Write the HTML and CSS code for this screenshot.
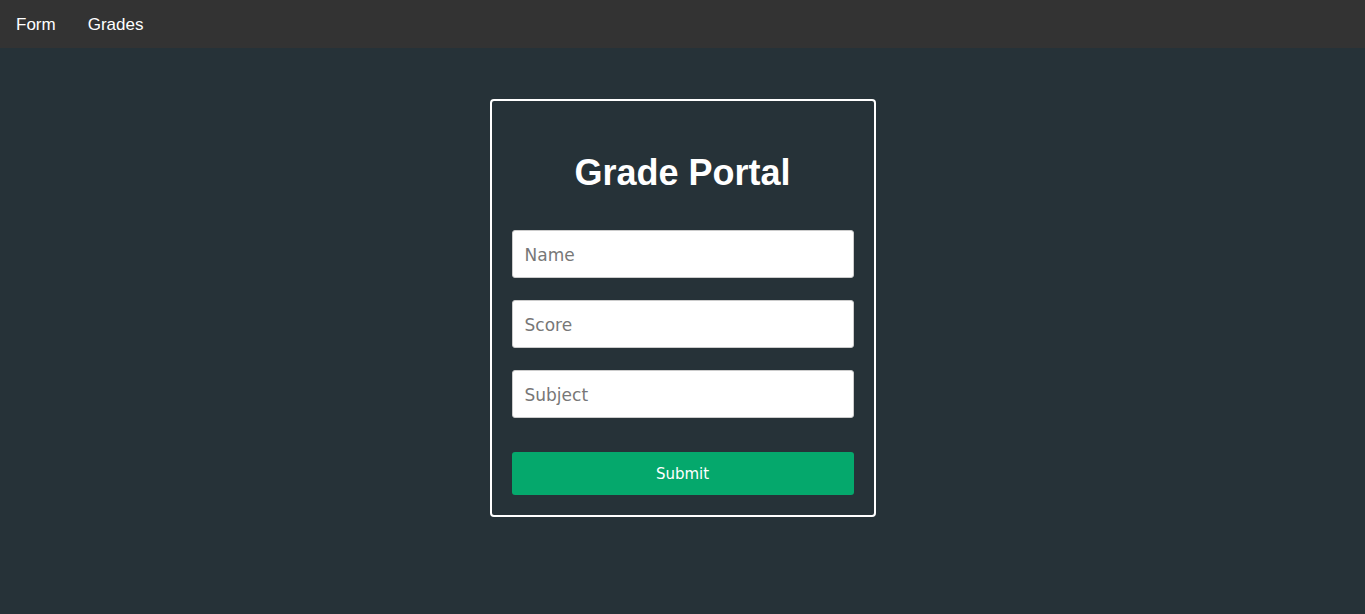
FILE: index.html
```html
<!DOCTYPE html>
<html lang="en">
<head>
  <meta charset="UTF-8" />
  <meta name="viewport" content="width=device-width, initial-scale=1.0" />
  <title>Grade Portal</title>
  <link rel="stylesheet" href="styles.css">
</head>
<body>
  <nav class="topbar">
    <a href="#" class="nav-link">Form</a>
    <a href="#" class="nav-link">Grades</a>
  </nav>

  <main class="page">
    <form class="card" onsubmit="return false">
      <h1 class="card-title">Grade Portal</h1>
      <input class="field" type="text" placeholder="Name">
      <input class="field" type="text" placeholder="Score">
      <input class="field" type="text" placeholder="Subject">
      <button class="btn-submit" type="submit">Submit</button>
    </form>
  </main>
</body>
</html>
```

FILE: styles.css
```css
body {
  margin: 0;
  font-family: "Liberation Sans", Arial, sans-serif;
  background: #263238;
  color: #fff;
}
.topbar {
  display: flex;
  gap: 32px;
  height: 48px;
  align-items: center;
  padding: 0 16px;
  background: #333333;
}
.nav-link {
  color: #fff;
  text-decoration: none;
  font-size: 17px;
  padding-top: 1px;
}
.page {
  display: flex;
  justify-content: center;
  padding-top: 51px;
}
.card {
  width: 342px;
  padding: 20px;
  border: 2px solid #fff;
  border-radius: 4px;
  display: flex;
  flex-direction: column;
  gap: 22px;
}
.card-title {
  margin: 31px 0 14px;
  font-size: 36px;
  text-align: center;
}
.field {
  box-sizing: border-box;
  height: 48px;
  width: 100%;
  padding: 2px 12px 0;
  border: 1px solid #ccc;
  border-radius: 3px;
  font-family: "DejaVu Sans", Tahoma, sans-serif;
  font-size: 17px;
  color: #333;
}
.field::placeholder {
  color: #777;
}
.btn-submit {
  margin-top: 12px;
  height: 43px;
  padding-top: 2px;
  border: none;
  border-radius: 3px;
  background: #05a86c;
  color: #fff;
  font-family: "DejaVu Sans", Tahoma, sans-serif;
  font-size: 15px;
  cursor: pointer;
}
```
